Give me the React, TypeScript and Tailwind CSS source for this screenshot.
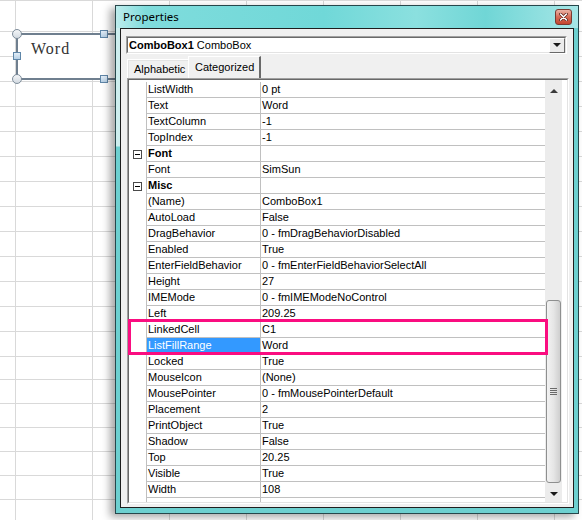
import React from "react";

type Row = {
  name: string;
  value?: string;
  category?: boolean;
  selected?: boolean;
};

const rows: Row[] = [
  { name: "ListWidth", value: "0 pt" },
  { name: "Text", value: "Word" },
  { name: "TextColumn", value: "-1" },
  { name: "TopIndex", value: "-1" },
  { name: "Font", category: true },
  { name: "Font", value: "SimSun" },
  { name: "Misc", category: true },
  { name: "(Name)", value: "ComboBox1" },
  { name: "AutoLoad", value: "False" },
  { name: "DragBehavior", value: "0 - fmDragBehaviorDisabled" },
  { name: "Enabled", value: "True" },
  { name: "EnterFieldBehavior", value: "0 - fmEnterFieldBehaviorSelectAll" },
  { name: "Height", value: "27" },
  { name: "IMEMode", value: "0 - fmIMEModeNoControl" },
  { name: "Left", value: "209.25" },
  { name: "LinkedCell", value: "C1" },
  { name: "ListFillRange", value: "Word", selected: true },
  { name: "Locked", value: "True" },
  { name: "MouseIcon", value: "(None)" },
  { name: "MousePointer", value: "0 - fmMousePointerDefault" },
  { name: "Placement", value: "2" },
  { name: "PrintObject", value: "True" },
  { name: "Shadow", value: "False" },
  { name: "Top", value: "20.25" },
  { name: "Visible", value: "True" },
  { name: "Width", value: "108" },
];

// spreadsheet row heights (px) behind the dialog
const sheetRows = [
  "h-[31px]", "h-[25px]", "h-[25px]", "h-[25px]", "h-[25px]", "h-[25px]", "h-[25px]",
  "h-[25px]", "h-[25px]", "h-[25px]", "h-[25px]", "h-[25px]", "h-[25px]", "h-[25px]",
  "h-[23px]", "h-[24px]", "h-[24px]", "h-[24px]", "h-[24px]", "h-[24px]", "h-[24px]",
];

const Sheet = () => (
  <>
    <div className="absolute inset-0 flex flex-col">
      {sheetRows.map((h, i) => (
        <div key={i} className={`${h} shrink-0 border-b border-[#d9d9d9]`} />
      ))}
    </div>
    <div className="absolute inset-0 flex">
      <div className="w-[16px] shrink-0 border-r border-[#d9d9d9]" />
      {[...Array(7)].map((_, i) => (
        <div key={i} className="w-[77px] shrink-0 border-r border-[#d9d9d9]" />
      ))}
    </div>
  </>
);

const Handle = ({ round, className }: { round?: boolean; className: string }) =>
  round ? (
    <div
      className={`absolute h-[10px] w-[10px] rounded-full border border-[#7d8c9a] bg-gradient-to-b from-[#f4f6f8] to-[#d3dae1] ${className}`}
    />
  ) : (
    <div
      className={`absolute h-[8px] w-[8px] border border-[#5f86a8] bg-gradient-to-b from-[#e3eef8] to-[#b8d1e6] ${className}`}
    />
  );

const ComboObject = () => (
  <div className="absolute left-[16px] top-[32px] h-[47px] w-[176px] border-2 border-[#6f7f8f] bg-white">
    <div className="pl-[13px] pt-[4px] font-['Liberation_Serif',serif] text-[16px] leading-[20px] tracking-[1px] text-[#333]">
      Word
    </div>
    <Handle round className="-left-[6px] -top-[6px]" />
    <Handle round className="-bottom-[6px] -left-[6px]" />
    <Handle className="-left-[5px] top-[17px]" />
    <Handle className="left-[82px] -top-[5px]" />
    <Handle className="-bottom-[5px] left-[82px]" />
  </div>
);

const Arrow = ({ up }: { up?: boolean }) =>
  up ? (
    <div className="h-0 w-0 border-x-[4px] border-b-[4px] border-x-transparent border-b-[#3a3a3a]" />
  ) : (
    <div className="h-0 w-0 border-x-[4px] border-t-[4px] border-x-transparent border-t-[#1a1a1a]" />
  );

const PropertyRow = ({ row }: { row: Row }) => (
  <div className="flex h-[16px] shrink-0">
    <div className="flex w-[17px] shrink-0 items-center justify-center">
      {row.category && (
        <div className="flex h-[9px] w-[9px] items-center justify-center border border-[#4a4a4a] bg-white">
          <div className="h-px w-[5px] bg-black" />
        </div>
      )}
    </div>
    <div className="flex flex-1 border-b border-l border-[#c0c0c0]">
      <div
        className={`w-[113px] shrink-0 truncate pl-[1px] leading-[15px] ${
          row.category ? "font-bold" : ""
        } ${row.selected ? "bg-[#3399ff] text-white" : ""}`}
      >
        {row.name}
      </div>
      <div className="flex-1 truncate border-l border-[#c0c0c0] pl-[1px] leading-[15px]">
        {row.value}
      </div>
    </div>
  </div>
);

const Scrollbar = () => (
  <div className="flex w-[17px] shrink-0 flex-col bg-[#ececec]">
    <div className="flex h-[17px] items-center justify-center pt-[5px]">
      <Arrow up />
    </div>
    <div className="mx-[1px] mb-[2px] mt-auto flex h-[183px] items-center justify-center rounded-[3px] border border-[#8e8f8f] bg-gradient-to-r from-[#f2f2f2] via-[#e6e6e6] to-[#cfcfcf]">
      <div className="flex flex-col gap-[1px]">
        <div className="h-px w-[7px] bg-[#6a6a6a]" />
        <div className="h-px w-[7px] bg-[#6a6a6a]" />
        <div className="h-px w-[7px] bg-[#6a6a6a]" />
        <div className="h-px w-[7px] bg-[#6a6a6a]" />
      </div>
    </div>
    <div className="flex h-[17px] shrink-0 items-center justify-center">
      <Arrow />
    </div>
  </div>
);

const PropertiesWindow = () => (
  <div className="absolute left-[115px] top-[4px] flex h-[509px] w-[464px] flex-col border border-[#26474b] bg-[linear-gradient(90deg,transparent_5px,#6dd0d0_5px),linear-gradient(180deg,#cdeeee_140px,#6dd0d0_141px)] shadow-[-5px_3px_8px_rgba(0,0,0,0.35)]">
    <div className="flex h-[22px] shrink-0 items-center justify-between bg-[linear-gradient(90deg,#bdecec_0px,#7fdcdc_30px,#70d8d8_45%,#8be0df_65%,#70d6d6_80%,#a6e6e6_100%)] pl-[7px] pr-[6px]">
      <span className="font-['Noto_Sans',sans-serif] text-[11.5px] text-black">Properties</span>
      <div className="flex h-[16px] w-[17px] items-center justify-center rounded-[3px] border border-[#7a3a31] bg-gradient-to-b from-[#eab3a6] via-[#d56a56] to-[#c4452f]">
        <svg width="9" height="8" viewBox="0 0 9 8">
          <path d="M1.5 1 L7.5 7 M7.5 1 L1.5 7" stroke="#5a2018" strokeWidth="3" strokeLinecap="round" />
          <path d="M1.5 1 L7.5 7 M7.5 1 L1.5 7" stroke="#ffffff" strokeWidth="1.6" strokeLinecap="round" />
        </svg>
      </div>
    </div>

    <div className="mx-[4px] mb-[5px] flex flex-1 flex-col border border-[#1e1e1e] bg-[#f0f0f0]">
      {/* object selector */}
      <div className="ml-[5px] mr-[6px] mt-[7px] flex h-[18px] border border-b-white border-l-[#a0a0a0] border-r-white border-t-[#a0a0a0]">
        <div className="flex flex-1 items-center border border-b-[#e3e3e3] border-l-[#696969] border-r-[#e3e3e3] border-t-[#696969] bg-white pl-[1px]">
          <span className="flex-1 text-[11px] leading-none">
            <b>ComboBox1</b> ComboBox
          </span>
          <div className="flex h-[15px] w-[16px] items-center justify-center border border-b-[#696969] border-l-white border-r-[#696969] border-t-white bg-[#ececec]">
            <Arrow />
          </div>
        </div>
      </div>

      {/* tabs */}
      <div className="ml-[6px] mt-[2px] flex h-[22px] items-end">
        <div className="flex h-[19px] w-[61px] items-center border-l border-t border-l-white border-t-white pl-[6px] text-[11px] shadow-[inset_1px_1px_0_#e3e3e3]">
          Alphabetic
        </div>
        <div className="flex h-[22px] w-[73px] items-center border-l border-r-2 border-t border-l-white border-r-[#696969] border-t-white pl-[6px] text-[11px]">
          Categorized
        </div>
      </div>

      {/* property grid */}
      <div className="ml-[6px] mr-[4px] flex h-[426px] border border-b-white border-l-[#a0a0a0] border-r-white border-t-[#a0a0a0]">
        <div className="relative flex flex-1 border border-b-[#e3e3e3] border-l-[#696969] border-r-[#e3e3e3] border-t-[#696969] bg-white pr-[3px]">
          <div className="flex w-[416px] shrink-0 flex-col pt-[2px] text-[11px]">
            {rows.map((row, i) => (
              <PropertyRow key={i} row={row} />
            ))}
            <div className="flex flex-1">
              <div className="w-[17px] shrink-0" />
              <div className="flex flex-1 border-l border-[#c0c0c0]">
                <div className="w-[113px] shrink-0" />
                <div className="flex-1 border-l border-[#c0c0c0]" />
              </div>
            </div>
          </div>
          <Scrollbar />
          <div className="absolute left-[-1px] top-[239px] h-[36px] w-[420px] border-[3px] border-[#fa0d80]" />
        </div>
      </div>
    </div>
  </div>
);

export default function App() {
  return (
    <div className="relative h-[520px] w-[582px] overflow-hidden border-t border-[#d9d9d9] bg-white font-['Liberation_Sans',Arial,sans-serif] text-black">
      <Sheet />
      <ComboObject />
      <PropertiesWindow />
    </div>
  );
}
